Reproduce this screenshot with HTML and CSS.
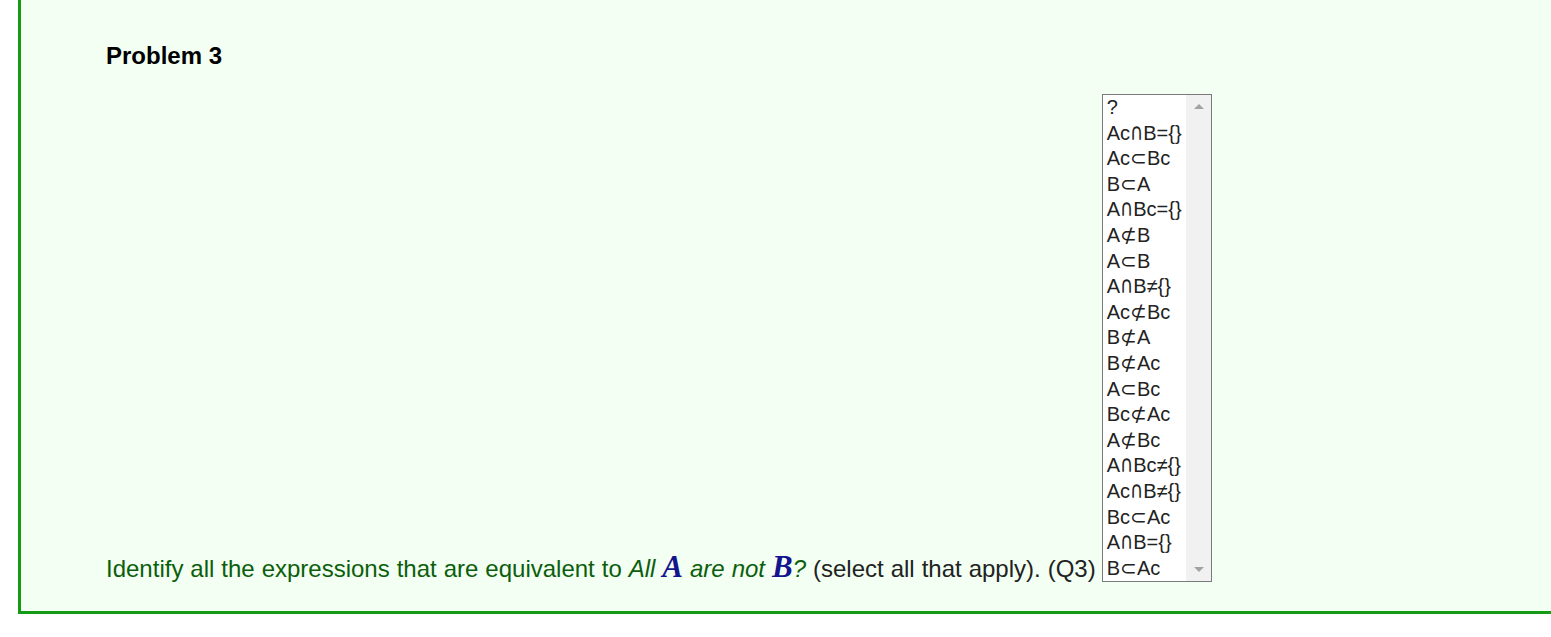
FILE: index.html
```html
<!DOCTYPE html>
<html>
<head>
<meta charset="utf-8">
<link rel="stylesheet" href="styles.css">
</head>
<body>
<div class="panel">
  <div class="title">Problem 3</div>
  <div class="question"><span class="q-green">Identify all the expressions that are equivalent to <i>All <span class="math">A</span> are not <span class="math">B</span>?</i></span> <span class="q-gray">(select all that apply). (Q3)</span><span class="listbox" role="listbox" aria-multiselectable="true"><span class="opt">?</span><span class="opt">Ac<span class="cap">∩</span>B={}</span><span class="opt">Ac⊂Bc</span><span class="opt">B⊂A</span><span class="opt">A<span class="cap">∩</span>Bc={}</span><span class="opt">A⊄B</span><span class="opt">A⊂B</span><span class="opt">A<span class="cap">∩</span>B≠{}</span><span class="opt">Ac⊄Bc</span><span class="opt">B⊄A</span><span class="opt">B⊄Ac</span><span class="opt">A⊂Bc</span><span class="opt">Bc⊄Ac</span><span class="opt">A⊄Bc</span><span class="opt">A<span class="cap">∩</span>Bc≠{}</span><span class="opt">Ac<span class="cap">∩</span>B≠{}</span><span class="opt">Bc⊂Ac</span><span class="opt">A<span class="cap">∩</span>B={}</span><span class="opt">B⊂Ac</span></span></div>
</div>
</body>
</html>
```

FILE: styles.css
```css
html, body {
  margin: 0;
  padding: 0;
  overflow: hidden;
  background: #ffffff;
}

.panel {
  margin-left: 18px;
  background: #f2fff2;
  border-left: 3px solid #159a15;
  border-bottom: 3px solid #159a15;
  padding: 42px 0 29px 85px;
  font-family: "Liberation Sans", Arial, sans-serif;
}

.title {
  font-weight: bold;
  font-size: 24px;
  line-height: 28px;
  color: #000;
  margin-bottom: 24px;
}

.question {
  font-size: 24px;
  line-height: 27px;
  word-spacing: 0.3px;
}

.q-green {
  color: #0c5e0c;
}

.q-gray {
  color: #222;
}

.math {
  font-family: "Liberation Serif", "Times New Roman", serif;
  font-weight: bold;
  font-style: italic;
  font-size: 31px;
  color: #14148f;
}

.listbox {
  position: relative;
  display: inline-block;
  vertical-align: 2px;
  box-sizing: border-box;
  width: 110px;
  margin-left: 6px;
  border: 1px solid #7a7a7a;
  background: linear-gradient(to right, #ffffff 0, #ffffff 83px, #f1f1f1 83px);
  font-size: 20px;
  line-height: 25.6px;
  word-spacing: 0;
}

.listbox::before,
.listbox::after {
  content: "";
  position: absolute;
  right: 7px;
  width: 0;
  height: 0;
  border-left: 5px solid transparent;
  border-right: 5px solid transparent;
}

.listbox::before {
  top: 9px;
  border-bottom: 5px solid #a3a3a3;
}

.listbox::after {
  bottom: 9px;
  border-top: 5px solid #a3a3a3;
}

.opt {
  display: block;
  padding-left: 4px;
  line-height: 25.6px;
  color: #222;
  white-space: nowrap;
}

.cap {
  display: inline-block;
  font-family: "DejaVu Sans", sans-serif;
  font-size: 18px;
  line-height: 1;
  transform: scaleY(1.3);
  transform-origin: 50% 85%;
}
```
